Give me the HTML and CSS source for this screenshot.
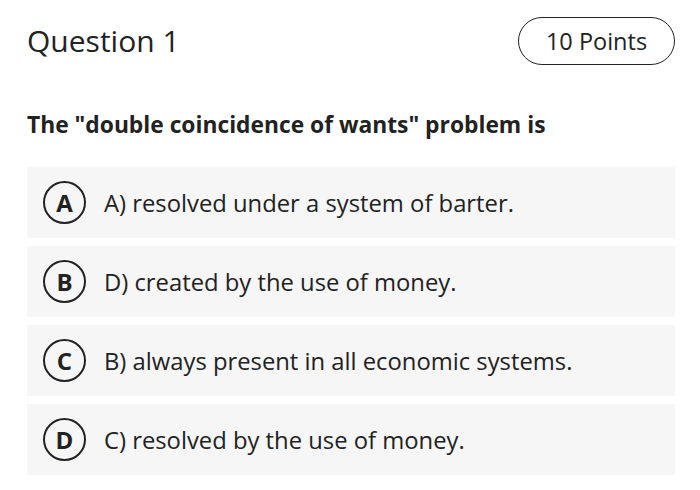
FILE: index.html
```html
<!DOCTYPE html>
<html>
<head>
<meta charset="utf-8">
<link rel="stylesheet" href="styles.css">
</head>
<body>
<div class="page">
  <div class="header">
    <h1 class="title">Question 1</h1>
    <div class="points">10 Points</div>
  </div>
  <p class="prompt">The "double coincidence of wants" problem is</p>
  <div class="options">
    <div class="option"><span class="letter">A</span><span class="text">A) resolved under a system of barter.</span></div>
    <div class="option"><span class="letter">B</span><span class="text">D) created by the use of money.</span></div>
    <div class="option"><span class="letter">C</span><span class="text">B) always present in all economic systems.</span></div>
    <div class="option"><span class="letter">D</span><span class="text">C) resolved by the use of money.</span></div>
  </div>
</div>
</body>
</html>
```
FILE: styles.css
```css
html, body {
  margin: 0;
  padding: 0;
  background: #ffffff;
}
body {
  font-family: "Open Sans", "Noto Sans", sans-serif;
  color: #222222;
}
.page {
  padding: 17px 25px 0 27px;
}
.header {
  display: flex;
  justify-content: space-between;
  align-items: center;
  height: 48px;
}
.title {
  margin: 0;
  font-size: 30px;
  font-weight: 400;
  line-height: 48px;
}
.points {
  box-sizing: border-box;
  height: 48px;
  width: 157px;
  border: 1.5px solid #222222;
  border-radius: 24px;
  font-size: 23.5px;
  display: flex;
  align-items: center;
  justify-content: center;
}
.prompt {
  margin: 45px 0 0 0;
  font-size: 22.8px;
  font-weight: 700;
  line-height: 30px;
}
.options {
  margin-top: 27px;
  display: flex;
  flex-direction: column;
  gap: 8px;
}
.option {
  display: flex;
  align-items: center;
  gap: 18px;
  height: 71px;
  background: #f6f6f6;
  padding-left: 16px;
}
.letter {
  box-sizing: border-box;
  width: 43px;
  height: 43px;
  border: 2.5px solid #222222;
  border-radius: 50%;
  display: flex;
  align-items: center;
  justify-content: center;
  font-size: 24px;
  font-weight: 700;
}
.text {
  font-size: 23.8px;
}
```
